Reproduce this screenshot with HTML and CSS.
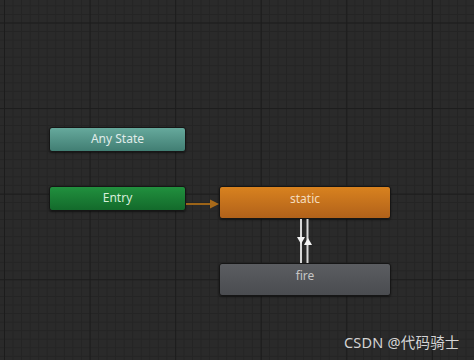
FILE: index.html
```html
<!doctype html>
<html>
<head>
    <title>Animator</title>
    <meta charset="utf-8">
    <link rel="stylesheet" href="styles.css">
</head>
<body>
    <div class="graph">
        <div class="node any">Any State</div>
        <div class="node entry">Entry</div>
        <div class="node state static">static</div>
        <div class="node state fire">fire</div>

        <svg class="links" width="474" height="360" viewBox="0 0 474 360">
            <!-- entry -> static -->
            <line x1="186" y1="204" x2="212" y2="204" stroke="#9c6418" stroke-width="2"/>
            <polygon points="210,199.5 219,204 210,208.5" fill="#a86a1a"/>
            <!-- static <-> fire -->
            <line x1="301" y1="219" x2="301" y2="263" stroke="#d8d8d8" stroke-width="2"/>
            <line x1="307.5" y1="219" x2="307.5" y2="263" stroke="#d8d8d8" stroke-width="2"/>
            <polygon points="297,237 305,237 301,244" fill="#f4f4f4"/>
            <polygon points="304,245 312,245 308,238" fill="#f4f4f4"/>
        </svg>

        <div class="mark">CSDN @代码骑士</div>
    </div>
</body>
</html>
```

FILE: styles.css
```css
body {
    margin: 0;
    padding: 0;
    background: #2a2a2a;
    font: 12px 'Noto Sans', 'Liberation Sans', sans-serif;
}

.graph {
    position: relative;
    width: 474px;
    height: 360px;
    overflow: hidden;
    background-color: #2a2a2a;
    background-image:
        linear-gradient(to right, #1c1c1c 1px, transparent 1px),
        linear-gradient(to bottom, #1c1c1c 1px, transparent 1px),
        linear-gradient(to right, #242424 1px, transparent 1px),
        linear-gradient(to bottom, #242424 1px, transparent 1px);
    background-size: 85.6px 85.6px, 85.6px 85.6px, 8.56px 8.56px, 8.56px 8.56px;
    background-position: 4px 22.5px, 4px 22.5px, 4px 22.5px, 4px 22.5px;
}

.node {
    position: absolute;
    box-sizing: border-box;
    text-align: center;
    border: 1px solid #161616;
    border-radius: 3px;
    box-shadow: 0 1px 2px rgba(0,0,0,0.5);
    line-height: 22px;
}

.any {
    left: 49px;
    top: 127px;
    width: 137px;
    height: 25px;
    color: #e0ecea;
    background: linear-gradient(#66a99c, #417e73);
}

.entry {
    left: 49px;
    top: 186px;
    width: 137px;
    height: 25px;
    color: #d6eeda;
    background: linear-gradient(#21903e, #136a2b);
}

.state {
    left: 219px;
    width: 172px;
    height: 33px;
    line-height: 14px;
    padding-top: 5px;
}

.static {
    top: 186px;
    color: #f4dcbf;
    background: linear-gradient(#d8821f, #b1611a);
}

.fire {
    top: 263px;
    color: #c6c6c6;
    background: linear-gradient(#5b5d61, #4a4c50);
}

.links {
    position: absolute;
    left: 0;
    top: 0;
}

.mark {
    position: absolute;
    left: 344px;
    top: 333px;
    color: #d4d4d4;
    font: 14.5px 'Noto Sans', 'Noto Sans CJK SC', sans-serif;
    line-height: 19px;
    letter-spacing: 0.2px;
}
```
